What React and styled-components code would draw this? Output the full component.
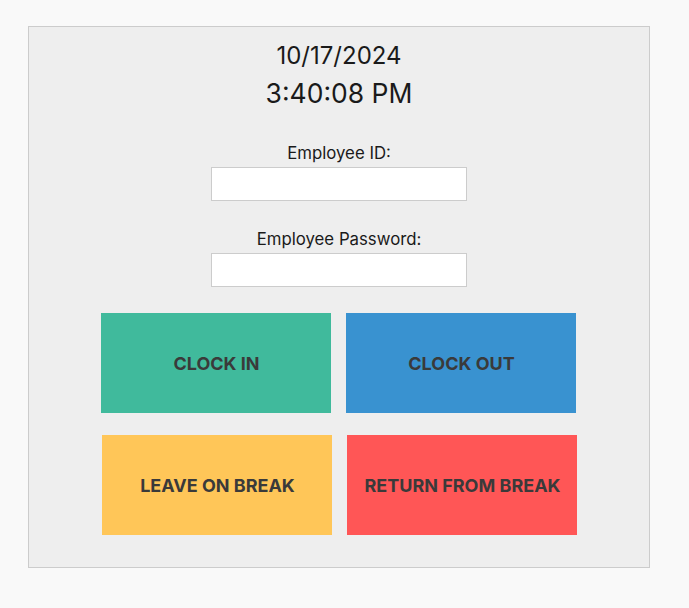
import styled, { createGlobalStyle } from "styled-components";

const GlobalStyle = createGlobalStyle`
  html, body {
    margin: 0;
    padding: 0;
    background: #f9f9f9;
    font-family: Inter, "Noto Sans", sans-serif;
    color: #1a1a1a;
  }
`;

const Page = styled.div`
  padding: 26px 0 0 28px;
`;

const Panel = styled.div`
  box-sizing: border-box;
  width: 622px;
  height: 542px;
  background: #eeeeee;
  border: 1px solid #cccccc;
  padding-top: 14px;
  display: flex;
  flex-direction: column;
  align-items: center;
`;

const DateText = styled.div`
  font-size: 24px;
  line-height: 29px;
`;

const TimeText = styled.div`
  font-size: 26.5px;
  line-height: 34px;
  margin-top: 6px;
`;

const Field = styled.div`
  display: flex;
  flex-direction: column;
  align-items: center;
  gap: 4px;
  margin-top: ${(p) => p.$top}px;
`;

const Label = styled.label`
  font-size: 16.8px;
  line-height: 20px;
`;

const Input = styled.input`
  box-sizing: border-box;
  width: 256px;
  height: 34px;
  background: #ffffff;
  border: 1px solid #cccccc;
  outline: none;
`;

const Row = styled.div`
  display: flex;
  gap: 15px;
  margin-top: ${(p) => p.$top}px;
  padding-right: ${(p) => p.$shift || 0}px;
`;

const ActionButton = styled.button`
  width: 230px;
  height: 100px;
  padding: 0 0 0 2px;
  border: none;
  background: ${(p) => p.$bg};
  color: #3a3a3a;
  font-family: Inter, "Noto Sans", sans-serif;
  font-size: 18px;
  font-weight: 700;
  cursor: pointer;
`;

export default function App() {
  return (
    <>
      <GlobalStyle />
      <Page>
        <Panel>
          <DateText>10/17/2024</DateText>
          <TimeText>3:40:08 PM</TimeText>
          <Field $top={33}>
            <Label>Employee ID:</Label>
            <Input type="text" />
          </Field>
          <Field $top={28}>
            <Label>Employee Password:</Label>
            <Input type="password" />
          </Field>
          <Row $top={26} $shift={2}>
            <ActionButton $bg="#40ba9c">CLOCK IN</ActionButton>
            <ActionButton $bg="#3992d0">CLOCK OUT</ActionButton>
          </Row>
          <Row $top={22}>
            <ActionButton $bg="#ffc658">LEAVE ON BREAK</ActionButton>
            <ActionButton $bg="#ff5656">RETURN FROM BREAK</ActionButton>
          </Row>
        </Panel>
      </Page>
    </>
  );
}
